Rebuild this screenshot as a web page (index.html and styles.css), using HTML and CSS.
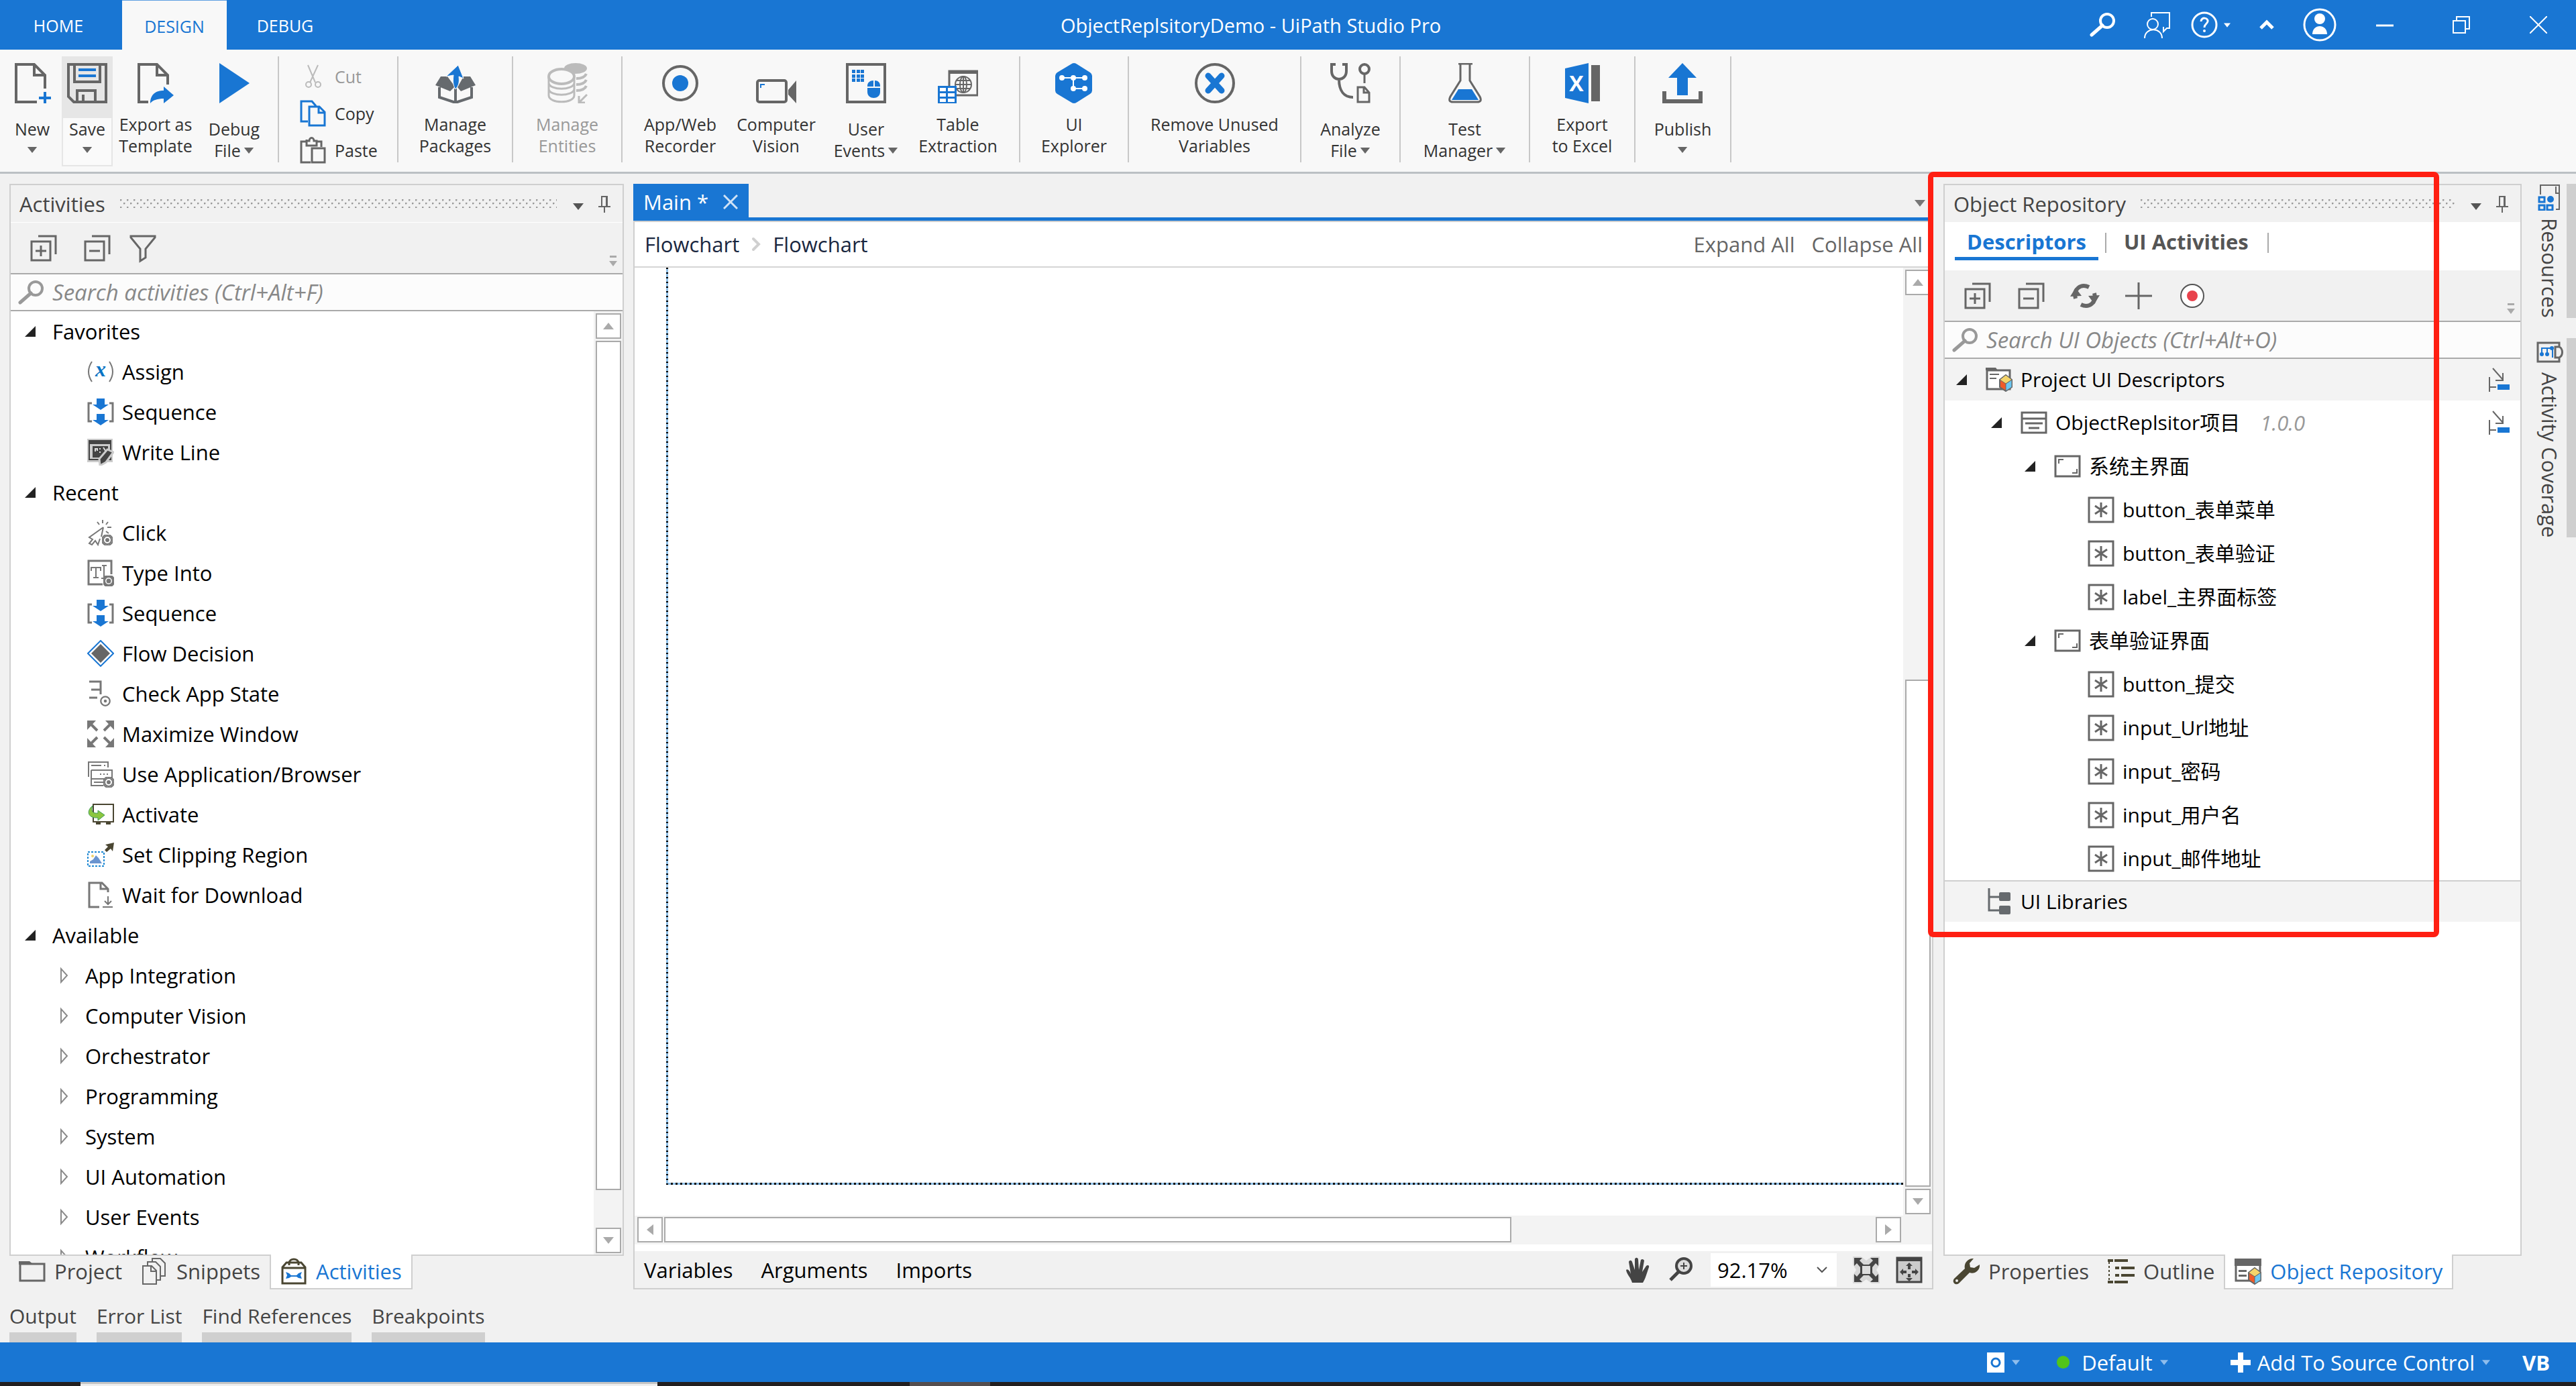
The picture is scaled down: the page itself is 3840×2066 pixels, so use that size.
FILE: index.html
```html
<!DOCTYPE html>
<html lang="en">
<head>
  <meta charset="UTF-8" />
  <meta name="viewport" content="width=device-width, initial-scale=1.0" />
  <title>ObjectReplsitoryDemo - UiPath Studio Pro</title>
  <link rel="stylesheet" href="styles.css">
</head>
<body>
  <!-- shared icons -->
  <svg class="sprite" aria-hidden="true">
    <symbol id="i-down" viewBox="0 0 16 10"><path d="M0 0h16L8 10z" fill="currentColor"/></symbol>
    <symbol id="i-up" viewBox="0 0 16 10"><path d="M0 10h16L8 0z" fill="currentColor"/></symbol>
    <symbol id="i-open" viewBox="0 0 18 18"><path d="M17 1v16H1z" fill="#222"/></symbol>
    <symbol id="i-closed" viewBox="0 0 14 26"><path d="M2 3v20l9-10z" fill="#fff" stroke="#8a8a8a" stroke-width="2"/></symbol>
    <symbol id="i-search" viewBox="0 0 40 36"><ellipse cx="27" cy="12" rx="10" ry="10" fill="none" stroke="currentColor" stroke-width="4"/><path d="M20 19L4 33" stroke="currentColor" stroke-width="5" stroke-linecap="round"/></symbol>
    <symbol id="i-pin" viewBox="0 0 18 26"><path d="M5 16V2h8v14M0 17h18M9 17v9" fill="none" stroke="#666" stroke-width="2"/><path d="M11 2h3v14h-3z" fill="#666"/></symbol>
    <symbol id="i-expand" viewBox="0 0 40 40"><path d="M12 2h26v27M2 10h28v28H2zM8 24h16M16 16v16" fill="none" stroke="#666" stroke-width="3"/></symbol>
    <symbol id="i-collapse" viewBox="0 0 40 40"><path d="M12 2h26v27M2 10h28v28H2zM8 24h16" fill="none" stroke="#666" stroke-width="3"/></symbol>
    <symbol id="i-more" viewBox="0 0 12 16"><path d="M1 0h10v3H1zM0 8h12l-6 8z" fill="#aaa"/></symbol>
    <symbol id="i-sequence" viewBox="0 0 40 40"><path d="M7 7H2v27h5M33 7h5v27h-5" fill="none" stroke="#777" stroke-width="3"/><path d="M14 0h12v9h6L20 17 8 9h6zM14 23h12v9h6L20 40 8 32h6z" fill="#1976d3"/></symbol>
    <symbol id="i-target" viewBox="0 0 16 16"><circle cx="8" cy="8" r="8" fill="#fff"/><circle cx="8" cy="8" r="6" fill="none" stroke="#777" stroke-width="2"/><circle cx="8" cy="8" r="2" fill="#777"/></symbol>
    <symbol id="i-screen" viewBox="0 0 40 34"><rect x="2" y="2" width="36" height="30" fill="#fff" stroke="#666" stroke-width="3"/><path d="M7 13V7h7M34 21v6h-7" fill="none" stroke="#666" stroke-width="2"/></symbol>
    <symbol id="i-element" viewBox="0 0 40 40"><rect x="2" y="2" width="36" height="36" fill="#fff" stroke="#666" stroke-width="3"/><path d="M20 9v22M11 14l18 12M11 26l18-12" stroke="#666" stroke-width="3"/></symbol>
    <symbol id="i-insert" viewBox="0 0 32 36"><path d="M2 14v22M2 29h10M7 1l15 17M22 8v11H11" fill="none" stroke="#666" stroke-width="2"/><path d="M14 25h18v8H14z" fill="#1976d3"/></symbol>
    <symbol id="i-cube" viewBox="0 0 20 26"><path d="M10 1l9 7v11l-9 6-9-6V8z" fill="#f05a28" stroke="#666" stroke-width="2"/><path d="M10 14l9-6v11l-9 6z" fill="#6cc7f2" stroke="#666"/><path d="M10 1l9 7-9 6-9-6z" fill="#f4d46a" stroke="#666"/></symbol>
  </svg>

  <header class="titlebar">
    <nav class="ribbon-tabs">
      <a href="#" class="tab-home">HOME</a>
      <a href="#" class="active">DESIGN</a>
      <a href="#" class="tab-debug">DEBUG</a>
    </nav>
    <h1 class="window-title">ObjectReplsitoryDemo - UiPath Studio Pro</h1>
    <div class="window-tools">
      <button aria-label="Search"><svg width="40" height="36"><use href="#i-search"/></svg></button>
      <button aria-label="Feedback"><svg width="40" height="40" viewBox="0 0 40 40" fill="none" stroke="#fff" stroke-width="2"><path d="M11 8V2h27v23h-4l-5 5v-7M1 40c0-17 26-17 26 0"/><circle cx="13" cy="19" r="8"/></svg></button>
      <button class="help" aria-label="Help"><svg width="40" height="40" viewBox="0 0 40 40"><circle cx="20" cy="20" r="18" fill="none" stroke="#fff" stroke-width="3"/><path d="M15 15c0-7 11-6 10 0-1 4-5 4-5 9" fill="none" stroke="#fff" stroke-width="3"/><circle cx="20" cy="29" r="2" fill="#fff"/></svg><svg width="10" height="7"><use href="#i-down"/></svg></button>
      <button aria-label="Collapse ribbon"><svg width="24" height="16" viewBox="0 0 24 16"><path d="M3 13l9-9 9 9" fill="none" stroke="#fff" stroke-width="5"/></svg></button>
      <button aria-label="Account"><svg width="50" height="50" viewBox="0 0 50 50"><circle cx="25" cy="25" r="23" fill="none" stroke="#fff" stroke-width="3"/><circle cx="25" cy="16" r="8" fill="#fff"/><path d="M14 39c0-16 22-16 22 0z" fill="#fff"/></svg></button>
      <button class="win" aria-label="Minimize"><svg width="26" height="26" viewBox="0 0 26 26"><path d="M0 14h26" stroke="#fff" stroke-width="3"/></svg></button>
      <button class="win" aria-label="Restore"><svg width="26" height="26" viewBox="0 0 26 26"><path d="M1 7h18v18H1zM6 6V1h19v18h-5" fill="none" stroke="#fff" stroke-width="2"/></svg></button>
      <button class="win" aria-label="Close"><svg width="26" height="26" viewBox="0 0 26 26"><path d="M0 0l26 26M26 0L0 26" stroke="#fff" stroke-width="2"/></svg></button>
    </div>
  </header>

  <section class="ribbon">
    <div class="group group-file">
      <button class="rb menu"><svg viewBox="0 0 60 60" fill="none" stroke="#666" stroke-width="4"><path d="M37 58H6V2h27l16 16v20M33 2v16h16" /><path d="M49 43v17M40 52h18" stroke="#1976d3"/></svg><span>New</span><svg class="arrow"><use href="#i-down"/></svg></button>
      <button class="rb menu selected"><svg viewBox="0 0 60 60" fill="none" stroke="#666" stroke-width="4"><path d="M2 2h56v56H10l-8-8zM11 2v26h38V2M15 58V41h27v17M24 47v13"/><path d="M17 10h26M17 19h26" stroke="#1976d3"/></svg><span>Save</span><svg class="arrow"><use href="#i-down"/></svg></button>
      <button class="rb"><svg viewBox="0 0 60 60"><path d="M19 58H5V2h27l16 16v14M32 2v16h16" fill="none" stroke="#666" stroke-width="4"/><path d="M22 60c0-14 9-19 20-19v-6l15 13-15 12v-7c-9 0-16 2-20 7z" fill="#1976d3"/></svg><span>Export as<br>Template</span></button>
      <button class="rb menu"><svg viewBox="0 0 60 60"><path d="M8 0l45 30L8 60z" fill="#1976d3"/></svg><span>Debug<br>File<svg class="arrow"><use href="#i-down"/></svg></span></button>
    </div>
    <div class="group group-clipboard">
      <button class="clip off"><svg viewBox="0 0 40 40" fill="none" stroke="#bbb" stroke-width="2"><path d="M12 3l11 26M27 3L15 29"/><circle cx="13" cy="32" r="4"/><circle cx="27" cy="32" r="4"/></svg>Cut</button>
      <button class="clip"><svg viewBox="0 0 40 40" fill="none" stroke="#1976d3" stroke-width="3"><path d="M12 32H2V2h16l6 7M14 10h15l8 8v20H14zM28 10v9h9"/></svg>Copy</button>
      <button class="clip"><svg viewBox="0 0 40 40" fill="none" stroke="#666" stroke-width="3"><path d="M16 38H2V7h8M25 7h7v8M10 4v9h15V6h-4c0-6-7-6-7 0h-4M18 17h19v21H18z"/></svg>Paste</button>
    </div>
    <div class="group">
      <button class="rb"><svg viewBox="0 0 60 60"><path d="M6 36v15l24 8 24-8V36M30 38v20" fill="none" stroke="#666a6e" stroke-width="4"/><path d="M18 20L8 20 0 33l22 9 7-7zM42 20l10 0 8 13-22 9-5-6z" fill="#666a6e"/><path d="M34 3l8 20-7-3c1 8 0 14-5 19-4-6-4-13-3-21l-11 2z" fill="#1976d3" stroke="#f8f8f8"/></svg><span>Manage<br>Packages</span></button>
    </div>
    <div class="group">
      <button class="rb off"><svg viewBox="0 0 60 60" fill="none" stroke="#bbb" stroke-width="4"><ellipse cx="42" cy="8" rx="17" ry="8" fill="#bbb" stroke="none"/><path d="M58 16c-2 5-8 7-15 7M58 25c-2 5-8 7-15 7M58 34c-2 5-8 7-15 7"/><ellipse cx="21" cy="20" rx="19" ry="11" fill="#f8f8f8"/><path d="M2 21v27c0 13 38 13 38 0V21M2 30c2 11 36 11 38 0M2 39c2 11 36 11 38 0" stroke-width="3"/><path d="M59 47L48 58M47 49v10h9" stroke-width="3"/></svg><span>Manage<br>Entities</span></button>
    </div>
    <div class="group group-record">
      <button class="rb"><svg viewBox="0 0 60 60"><circle cx="30" cy="30" r="25" fill="none" stroke="#666" stroke-width="4"/><circle cx="30" cy="30" r="12" fill="#1976d3"/></svg><span>App/Web<br>Recorder</span></button>
      <button class="rb"><svg viewBox="0 0 60 60"><rect x="2" y="26" width="43" height="32" rx="3" fill="none" stroke="#666" stroke-width="4"/><path d="M48 40l12-14v34L48 47z" fill="#666"/><path d="M7 37v-5h6" fill="none" stroke="#1976d3" stroke-width="2"/></svg><span>Computer<br>Vision</span></button>
      <button class="rb menu"><svg viewBox="0 0 60 60"><rect x="2" y="2" width="56" height="56" fill="none" stroke="#666" stroke-width="4"/><path d="M9 10h5v5H9zM16 10h5v5h-5zM22 10h5v5h-5zM9 17h5v5H9zM16 17h5v5h-5zM22 17h5v5h-5zM9 23h5v5H9zM16 23h5v5h-5zM22 23h5v5h-5z" fill="#1976d3"/><path d="M32 35v-1c0-5 4-8 9-8v9zM43 26c5 0 8 3 8 8v1h-8zM32 37h19v6c0 12-19 12-19 0z" fill="#1976d3"/></svg><span>User<br>Events<svg class="arrow"><use href="#i-down"/></svg></span></button>
      <button class="rb"><svg viewBox="0 0 60 60"><path d="M17 12h42v36H17z" fill="none" stroke="#666" stroke-width="3"/><path d="M16 11h44v5H16z" fill="#666"/><g fill="none" stroke="#666" stroke-width="2"><circle cx="38" cy="32" r="12"/><ellipse cx="38" cy="32" rx="5" ry="12"/><path d="M38 20v24M26 32h24M28 26h20M28 38h20"/></g><path d="M0 34h28v26H0z" fill="#1976d3"/><path d="M3 37h9v5H3zM15 37h10v5H15zM3 45h9v5H3zM15 45h10v5H15zM3 53h9v5H3zM15 53h10v5H15z" fill="#fff"/></svg><span>Table<br>Extraction</span></button>
    </div>
    <div class="group">
      <button class="rb"><svg viewBox="0 0 60 60"><path d="M25 2q5-4 10 0l19 12q3 2 3 5v22q0 3-3 5L35 58q-5 4-10 0L5 46q-3-2-3-5V19q0-3 3-5z" fill="#1976d3"/><path d="M12 22h34M29 22v16h17" fill="none" stroke="#fff" stroke-width="2"/><g fill="#fff"><circle cx="12" cy="22" r="4"/><circle cx="29" cy="22" r="4"/><circle cx="46" cy="22" r="4"/><circle cx="29" cy="38" r="4"/><circle cx="46" cy="38" r="4"/></g></svg><span>UI<br>Explorer</span></button>
    </div>
    <div class="group">
      <button class="rb"><svg viewBox="0 0 60 60"><circle cx="30" cy="30" r="28" fill="none" stroke="#666" stroke-width="4"/><path d="M20 19l20 22M40 19L20 41" stroke="#1976d3" stroke-width="9" stroke-linecap="round"/></svg><span>Remove Unused<br>Variables</span></button>
    </div>
    <div class="group">
      <button class="rb menu"><svg viewBox="0 0 60 60" fill="none" stroke="#666" stroke-width="4"><path d="M8 2H2v10c0 16 22 16 22 0V2h-6M13 24c0 18 8 27 21 27"/><circle cx="51" cy="9" r="7"/><path d="M51 16v14M41 36h10l7 8v14H41zM50 36v8h8" stroke-width="3"/></svg><span>Analyze<br>File<svg class="arrow"><use href="#i-down"/></svg></span></button>
    </div>
    <div class="group">
      <button class="rb menu"><svg viewBox="0 0 60 60"><path d="M20 1h21M23 1v25L8 50q-4 8 4 8h36q8 0 4-8L37 26V1" fill="none" stroke="#666" stroke-width="3"/><path d="M20 39h20l10 16H10z" fill="#1976d3"/></svg><span>Test<br>Manager<svg class="arrow"><use href="#i-down"/></svg></span></button>
    </div>
    <div class="group">
      <button class="rb"><svg viewBox="0 0 60 60"><path d="M4 8l35-8v60L4 52z" fill="#1976d3"/><path d="M43 3h13v54H43z" fill="#666"/><text x="21" y="42" text-anchor="middle" class="excel-x">X</text></svg><span>Export<br>to Excel</span></button>
    </div>
    <div class="group">
      <button class="rb menu"><svg viewBox="0 0 60 60"><path d="M30 0l21 22H38v26H22V22H9z" fill="#1976d3"/><path d="M3 42v15h54V42" fill="none" stroke="#666" stroke-width="6"/></svg><span>Publish</span><svg class="arrow"><use href="#i-down"/></svg></button>
    </div>
  </section>

  <main class="workspace">
    <section class="dock dock-left">
      <div class="dock-frame">
        <header class="dock-header"><h2>Activities</h2><i class="grip"></i><svg class="arrow-lg"><use href="#i-down"/></svg><svg width="18" height="26"><use href="#i-pin"/></svg></header>
        <div class="toolbar">
          <button aria-label="Expand all"><svg><use href="#i-expand"/></svg></button>
          <button aria-label="Collapse all"><svg><use href="#i-collapse"/></svg></button>
          <button class="filter" aria-label="Filter"><svg viewBox="0 0 40 40"><path d="M2 2h36v2L24 21v13l-8 5V21L2 4z" fill="none" stroke="#666" stroke-width="3"/></svg></button>
          <svg class="more"><use href="#i-more"/></svg>
        </div>
        <label class="search"><svg><use href="#i-search"/></svg><input type="text" placeholder="Search activities (Ctrl+Alt+F)" aria-label="Search activities"></label>
        <div class="scroll-area">
          <ul class="activities">
            <li class="root"><svg><use href="#i-open"/></svg>Favorites</li>
            <li><svg viewBox="0 0 40 40"><path d="M7 5q-10 15 0 30M33 5q10 15 0 30" fill="none" stroke="#777" stroke-width="2"/><text x="20" y="27" text-anchor="middle" class="assign-x">x</text></svg>Assign</li>
            <li><svg><use href="#i-sequence"/></svg>Sequence</li>
            <li><svg viewBox="0 0 40 40"><path d="M0 0h38v35H0z" fill="#ccc"/><path d="M3 4h32v27H3z" fill="none" stroke="#444" stroke-width="2"/><path d="M2 2h34v6H2z" fill="#444"/><path d="M8 11h23v17H8z" fill="#444"/><path d="M12 19v-4h3v3M19 14v2M19 19v2M24 13l4 6" fill="none" stroke="#ddd" stroke-width="2"/><path d="M19 40l-1-10 12-14 9 4-11 15z" fill="#444" stroke="#ccc" stroke-width="3"/></svg>Write Line</li>
            <li class="root"><svg><use href="#i-open"/></svg>Recent</li>
            <li><svg viewBox="0 0 40 40" fill="none" stroke="#777" stroke-width="2"><path d="M24 12L3 27l5 3-5 6 4 2 5-6 4 6 3-9M24 12l-3 14M23 1v5M15 4l3 4M31 4l-3 4M30 12h6M28 18l4 3"/><use href="#i-target" x="22" y="23" width="16" height="16"/></svg>Click</li>
            <li><svg viewBox="0 0 40 40" fill="none" stroke="#777" stroke-width="3"><path d="M36 22V2H2v35h21"/><path d="M6 17v-5h14v5M13 12v15M9 27h8M22 9h7M25 9v19M21 28h5" stroke-width="2"/><use href="#i-target" x="24" y="24" width="16" height="16"/></svg>Type Into</li>
            <li><svg><use href="#i-sequence"/></svg>Sequence</li>
            <li><svg viewBox="0 0 40 40"><path d="M20 1l19 19-19 19L1 20z" fill="#fff" stroke="#1976d3" stroke-width="2"/><path d="M20 6l14 14-14 14L6 20z" fill="#666"/></svg>Flow Decision</li>
            <li><svg viewBox="0 0 40 40"><path d="M3 2h17v19M6 14h14M3 26h12" fill="none" stroke="#777" stroke-width="3"/><use href="#i-target" x="18" y="22" width="18" height="18"/></svg>Check App State</li>
            <li><svg viewBox="0 0 40 40"><path d="M5 5l10 10M35 5L25 15M5 35l10-10M35 35L25 25" stroke="#777" stroke-width="4"/><path d="M0 0h13L0 14zM40 0H27l13 14zM0 40h13L0 26zM40 40H27l13-14z" fill="#777"/></svg>Maximize Window</li>
            <li><svg viewBox="0 0 40 40" fill="none" stroke="#777" stroke-width="2"><path d="M2 24V2h29v8M6 7h15M25 7h2M6 14h31v13M6 14v23h18M6 27h20M10 32h14M19 20h2M24 20h2M29 20h2"/><use href="#i-target" x="24" y="24" width="16" height="16"/></svg>Use Application/Browser</li>
            <li><svg viewBox="0 0 40 40"><path d="M9 5h30v26H9z" fill="#fff" stroke="#4a4632" stroke-width="2"/><path d="M13 31h7v4h-7zM28 31h7v4h-7z" fill="#4a4632"/><path d="M8 7C-2 15 1 26 16 25v4l10-8-10-7v4C8 19 5 15 8 7z" fill="#8cc63f" stroke="#3f9c56"/></svg>Activate</li>
            <li><svg viewBox="0 0 40 40"><path d="M1 16h24v21H1z" fill="none" stroke="#1e88d2" stroke-width="2" stroke-dasharray="3 2"/><path d="M4 33v-3l5-3 4-6 4 4 5 8z" fill="#6a94cf"/><circle cx="8" cy="22" r="2" fill="#f1d36b"/><path d="M40 2L27 5l4 3-5 5 3 3 6-5 3 4z" fill="#4a4632"/></svg>Set Clipping Region</li>
            <li><svg viewBox="0 0 40 40" fill="none" stroke="#777" stroke-width="3"><path d="M18 38H3V2h19l9 9v5M20 2v9h11"/><path d="M31 22v12M26 29l5 5 5-5M23 38h15" stroke-width="2"/></svg>Wait for Download</li>
            <li class="root"><svg><use href="#i-open"/></svg>Available</li>
            <li class="cat"><svg><use href="#i-closed"/></svg>App Integration</li>
            <li class="cat"><svg><use href="#i-closed"/></svg>Computer Vision</li>
            <li class="cat"><svg><use href="#i-closed"/></svg>Orchestrator</li>
            <li class="cat"><svg><use href="#i-closed"/></svg>Programming</li>
            <li class="cat"><svg><use href="#i-closed"/></svg>System</li>
            <li class="cat"><svg><use href="#i-closed"/></svg>UI Automation</li>
            <li class="cat"><svg><use href="#i-closed"/></svg>User Events</li>
            <li class="cat"><svg><use href="#i-closed"/></svg>Workflow</li>
          </ul>
          <div class="vscroll">
            <button aria-label="Scroll up"><svg><use href="#i-up"/></svg></button>
            <div class="track track-activities"><div class="thumb"></div></div>
            <button aria-label="Scroll down"><svg><use href="#i-down"/></svg></button>
          </div>
        </div>
      </div>
      <nav class="dock-tabs">
        <a href="#"><svg viewBox="0 0 40 40"><path d="M2 9h36v25H2z" fill="none" stroke="#666" stroke-width="3"/><path d="M0 5h16l6 5H0z" fill="#666"/></svg>Project</a>
        <a href="#"><svg viewBox="0 0 40 40" fill="#f1f1f1" stroke="#666" stroke-width="2"><path d="M17 1h12l7 7v19H17z"/><path d="M10 6h12l7 7v20H10z"/><path d="M3 12h13l7 7v20H3zM15 12v8h8"/></svg>Snippets</a>
        <a href="#" class="active"><svg viewBox="0 0 40 40"><path d="M3 14l6-7h22l6 7v24H3zM3 15h34M13 11V8c0-8 14-8 14 0v3" fill="none" stroke="#4a4632" stroke-width="3"/><path d="M8 21l5 2 3 3h8l3-3 5-2-2 5 2 5-5-1-3-2h-8l-3 2-5 1 2-5z" fill="#1976d3"/></svg>Activities</a>
      </nav>
    </section>

    <section class="designer">
      <div class="doc-tabs">
        <a href="#" class="doc-tab">Main *<svg width="22" height="22" viewBox="0 0 22 22"><path d="M1 1l20 20M21 1L1 21" stroke="#cfe2f6" stroke-width="3"/></svg></a>
        <svg class="arrow-lg"><use href="#i-down"/></svg>
      </div>
      <div class="doc-body">
        <div class="breadcrumb">
          <a href="#">Flowchart</a>
          <svg width="14" height="22" viewBox="0 0 14 22"><path d="M3 3l8 8-8 8" fill="none" stroke="#d0d0d0" stroke-width="4" stroke-linecap="round"/></svg>
          <a href="#">Flowchart</a>
          <button class="first">Expand All</button>
          <button>Collapse All</button>
        </div>
        <div class="canvas-row">
          <div class="canvas"><div class="flow"></div></div>
          <div class="vscroll">
            <button aria-label="Scroll up"><svg><use href="#i-up"/></svg></button>
            <div class="track track-canvas"><div class="thumb"></div></div>
            <button aria-label="Scroll down"><svg><use href="#i-down"/></svg></button>
          </div>
        </div>
        <div class="hscroll">
          <button aria-label="Scroll left"><svg class="left"><use href="#i-up"/></svg></button>
          <div class="track"><div class="thumb"></div></div>
          <button aria-label="Scroll right"><svg class="right"><use href="#i-up"/></svg></button>
        </div>
        <div class="designer-bar">
          <button>Variables</button>
          <button>Arguments</button>
          <button>Imports</button>
          <div class="zoom-tools">
            <svg viewBox="0 0 40 40"><path d="M11 39c-2-8-8-12-9-19 2-2 5 0 7 6L6 8c1-3 4-3 5 0l4 12V4c1-3 4-3 5 0l1 16 3-15c2-2 4-1 5 1l-3 17 6-9c2-2 5-1 4 2-3 8-5 17-9 23z" fill="#444"/></svg>
            <svg viewBox="0 0 40 40"><circle cx="24" cy="14" r="11" fill="#ddd" stroke="#444" stroke-width="4"/><path d="M24 9v10M19 14h10" stroke="#444" stroke-width="2"/><path d="M16 23L4 35" stroke="#444" stroke-width="5"/></svg>
            <label class="zoom-select"><select aria-label="Zoom"><option>92.17%</option></select><svg width="16" height="10" viewBox="0 0 16 10"><path d="M1 1l7 7 7-7" fill="none" stroke="#555" stroke-width="2"/></svg></label>
            <svg viewBox="0 0 40 40"><path d="M0 0h12l8 6 8-6h12v12l-5 8 5 8v12H28l-8-6-8 6H0V28l5-8-5-8z" fill="#d8d8d8"/><path d="M2 2h12l-4 4 6 6h8l6-6-4-4h12v12l-4-4-5 6v8l5 6 4-4v12H26l4-4-6-6h-8l-6 6 4 4H2V26l4 4 5-6v-8l-5-6-4 4z" fill="#444"/><path d="M14 14h12v12H14z" fill="#ddd"/></svg>
            <svg viewBox="0 0 40 40"><path d="M2 2h36v36H2z" fill="#ccc" stroke="#444" stroke-width="3"/><path d="M1 1h38v6H1zM20 9l5 5H15zM20 37l5-5H15zM6 23l5-5v10zM34 23l-5-5v10zM18 14h4v5h-4zM18 26h4v5h-4zM11 21h5v4h-5zM24 21h5v4h-5z" fill="#444"/></svg>
          </div>
        </div>
      </div>
    </section>

    <section class="dock dock-right">
      <div class="dock-frame">
        <header class="dock-header"><h2>Object Repository</h2><i class="grip"></i><svg class="arrow-lg"><use href="#i-down"/></svg><svg width="18" height="26"><use href="#i-pin"/></svg></header>
        <nav class="repo-tabs">
          <a href="#" class="active">Descriptors</a>
          <a href="#">UI Activities</a>
        </nav>
        <div class="toolbar">
          <button aria-label="Expand all"><svg><use href="#i-expand"/></svg></button>
          <button aria-label="Collapse all"><svg><use href="#i-collapse"/></svg></button>
          <button aria-label="Refresh"><svg viewBox="0 0 40 40"><path d="M6 24C2 10 14 1 26 7M34 16c4 14-8 23-20 17" fill="none" stroke="#666" stroke-width="6"/><path d="M-2 21L6 8l9 12zM42 19l-8 13-9-12z" fill="#666"/></svg></button>
          <button aria-label="Add"><svg viewBox="0 0 40 40"><path d="M20 0v40M0 20h40" stroke="#666" stroke-width="3"/></svg></button>
          <button aria-label="Record"><svg viewBox="0 0 40 40"><circle cx="20" cy="20" r="17" fill="#fff" stroke="#555" stroke-width="2"/><circle cx="20" cy="20" r="8" fill="#e8424c"/></svg></button>
          <svg class="more"><use href="#i-more"/></svg>
        </div>
        <label class="search"><svg><use href="#i-search"/></svg><input type="text" placeholder="Search UI Objects (Ctrl+Alt+O)" aria-label="Search UI Objects"></label>
        <ul class="tree">
          <li class="band"><svg class="caret"><use href="#i-open"/></svg><svg viewBox="0 0 40 36"><path d="M2 4h34v28H2z" fill="#fff" stroke="#666" stroke-width="3"/><path d="M0 0h15l3 4H0zM6 9h14v2H6zM6 15h10v2H6z" fill="#666"/><use href="#i-cube" x="20" y="10" width="20" height="26"/></svg>Project UI Descriptors<svg class="insert"><use href="#i-insert"/></svg></li>
          <li class="lv1"><svg class="caret"><use href="#i-open"/></svg><svg viewBox="0 0 40 34"><path d="M2 2h36v30H2zM2 11h36M7 18h26M12 25h16" fill="none" stroke="#666" stroke-width="3"/></svg>ObjectReplsitor项目<em>1.0.0</em><svg class="insert"><use href="#i-insert"/></svg></li>
          <li class="lv2"><svg class="caret"><use href="#i-open"/></svg><svg><use href="#i-screen"/></svg>系统主界面</li>
          <li class="lv3"><svg><use href="#i-element"/></svg>button_表单菜单</li>
          <li class="lv3"><svg><use href="#i-element"/></svg>button_表单验证</li>
          <li class="lv3"><svg><use href="#i-element"/></svg>label_主界面标签</li>
          <li class="lv2"><svg class="caret"><use href="#i-open"/></svg><svg><use href="#i-screen"/></svg>表单验证界面</li>
          <li class="lv3"><svg><use href="#i-element"/></svg>button_提交</li>
          <li class="lv3"><svg><use href="#i-element"/></svg>input_Url地址</li>
          <li class="lv3"><svg><use href="#i-element"/></svg>input_密码</li>
          <li class="lv3"><svg><use href="#i-element"/></svg>input_用户名</li>
          <li class="lv3"><svg><use href="#i-element"/></svg>input_邮件地址</li>
          <li class="band libraries"><svg viewBox="0 0 40 40"><path d="M5 0v33h17M5 13h17" fill="none" stroke="#666a6e" stroke-width="3"/><rect x="20" y="6" width="17" height="13" rx="2" fill="#666a6e"/><rect x="20" y="26" width="17" height="13" rx="2" fill="#666a6e"/></svg>UI Libraries</li>
        </ul>
      </div>
      <nav class="dock-tabs">
        <a href="#"><svg viewBox="0 0 40 40"><path d="M40 10c1 8-7 15-15 12L9 38c-5 4-11-2-7-7l16-15C16 8 23 0 31 1l-6 7 1 6 6 1z" fill="#4a4632"/><circle cx="6" cy="34" r="2" fill="#f1f1f1"/></svg>Properties</a>
        <a href="#"><svg viewBox="0 0 40 40"><path d="M0 4h8M10 4h20M11 15h6M20 15h20M11 26h6M20 26h20M0 36h8M10 36h20" stroke="#4a4632" stroke-width="4"/><path d="M2 6v30" stroke="#4a4632" stroke-width="2" stroke-dasharray="3 3"/></svg>Outline</a>
        <a href="#" class="active"><svg viewBox="0 0 40 40"><path d="M2 4h36v30H2z" fill="#fff" stroke="#666" stroke-width="3"/><path d="M0 1h40v11H0zM6 18h12v3H6zM6 25h12v3H6z" fill="#666"/><use href="#i-cube" x="20" y="14" width="20" height="26"/></svg>Object Repository</a>
      </nav>
      <div class="highlight"></div>
    </section>

    <aside class="side-tabs">
      <button class="resources"><svg width="36" height="40" viewBox="0 0 36 40"><path d="M4 16V2h28v12h-5V4M27 14h5v24h-5" fill="none" stroke="#666" stroke-width="2"/><path d="M2 20h8v7H2zM2 32h8v7H2zM14 32h8v7h-8z" fill="none" stroke="#1976d3" stroke-width="3"/><circle cx="19" cy="23" r="5" fill="#1976d3"/></svg><span>Resources</span></button>
      <button class="coverage"><svg width="40" height="32" viewBox="0 0 40 32"><path d="M34 8V2H2v28h32v-6M34 8h-6v16h6c6-3 6-13 0-16z" fill="none" stroke="#666" stroke-width="3"/><path d="M8 18v-8h16v14M16 10v8" fill="none" stroke="#1976d3" stroke-width="2"/><circle cx="8" cy="19" r="3" fill="#1976d3"/><circle cx="16" cy="19" r="3" fill="#1976d3"/><circle cx="23" cy="10" r="3" fill="#1976d3"/></svg><span>Activity Coverage</span></button>
    </aside>
  </main>

  <nav class="bottom-tabs">
    <button>Output</button>
    <button>Error List</button>
    <button>Find References</button>
    <button>Breakpoints</button>
  </nav>

  <footer class="statusbar">
    <button class="doc"><svg width="26" height="30" viewBox="0 0 26 30"><path d="M0 0h26v30H0z" fill="#fff"/><circle cx="13" cy="15" r="6" fill="none" stroke="#1976d3" stroke-width="3"/></svg><svg class="arrow-sm"><use href="#i-down"/></svg></button>
    <button class="robot"><i class="dot"></i>Default<svg class="arrow-sm"><use href="#i-down"/></svg></button>
    <button class="source"><svg width="30" height="30" viewBox="0 0 30 30"><path d="M15 0v30M0 15h30" stroke="#fff" stroke-width="8"/></svg>Add To Source Control<svg class="arrow-sm"><use href="#i-down"/></svg></button>
    <strong>VB</strong>
  </footer>
  <div class="taskbar"><i class="task-window"></i><i class="task-item"></i></div>
</body>
</html>
```
FILE: styles.css
```css
:root {
  --blue: #1976d3;
  --bg: #f1f1f1;
  --line: #cfcfcf;
  --dark-line: #aaa;
  --text: #444;
}

* {
  margin: 0;
  padding: 0;
  box-sizing: border-box;
}

body {
  display: flex;
  flex-direction: column;
  height: 100vh;
  overflow: hidden;
  background: var(--bg);
  font-family: "Open Sans", "Noto Sans CJK SC", sans-serif;
  font-size: 31px;
  line-height: 40px;
  color: #000;
}

button,
input,
select {
  font: inherit;
  color: inherit;
  background: none;
  border: none;
}

button {
  display: flex;
  align-items: center;
  white-space: nowrap;
}

a {
  color: inherit;
  text-decoration: none;
}

ul {
  list-style: none;
}

svg {
  flex: none;
  display: block;
}

.sprite {
  position: absolute;
  width: 0;
  height: 0;
}

/* title bar */
.titlebar {
  display: grid;
  grid-template-columns: 1fr auto 1fr;
  align-items: center;
  height: 74px;
  flex: none;
  background: var(--blue);
  color: #fff;
}

.ribbon-tabs {
  display: flex;
  align-self: stretch;
  font-size: 25px;
}

.ribbon-tabs a {
  display: flex;
  align-items: center;
  justify-content: center;
  width: 174px;
  padding-top: 2px;
}

.ribbon-tabs .tab-home {
  width: 182px;
  padding-right: 8px;
}

.ribbon-tabs .active {
  width: 156px;
  background: #f8f8f8;
  color: var(--blue);
  border-top: 1px solid #5d9fe2;
}

.window-title {
  font-size: 29px;
  font-weight: 400;
  padding: 2px 116px 0 0;
}

.titlebar {
  grid-template-columns: 1581px auto 1fr;
}

.window-tools {
  display: flex;
  justify-content: flex-end;
  align-items: center;
  gap: 42px;
  padding-right: 43px;
}

.window-tools .help {
  gap: 9px;
  margin-left: -12px;
}

.window-tools .win {
  width: 60px;
  justify-content: center;
  margin-right: 12px;
}

.window-tools .win:last-child {
  width: 26px;
  margin-left: 18px;
  margin-right: 0;
}

/* ribbon */
.ribbon {
  display: grid;
  grid-template-columns: 416px 178px 171px 163px 593px 162px 257px 148px 193px 157px 143px;
  flex: none;
  height: 185px;
  padding-top: 10px;
  background: #f8f8f8;
  border-bottom: 3px solid #bbc0c4;
  color: #333;
}

.group {
  display: flex;
  justify-content: center;
  height: 158px;
  border-right: 2px solid #c8c8c8;
}

.group-file {
  display: grid;
  grid-template-columns: 76px 76px 116px 106px;
  gap: 6px;
  justify-content: start;
  padding-left: 10px;
}

.group-record {
  display: grid;
  grid-template-columns: 144px 142px 126px 148px;
  justify-content: start;
  padding-left: 14px;
}

.rb {
  flex-direction: column;
  height: 164px;
  padding-top: 10px;
  font-size: 25px;
  line-height: 32px;
  text-align: center;
}

.rb > svg:first-child {
  width: 60px;
  height: 60px;
  margin-bottom: 15px;
}

.rb.menu > svg:first-child {
  margin-bottom: 22px;
}

.rb .arrow {
  width: 16px;
  height: 9px;
  color: #666;
}

.rb > .arrow {
  margin-top: 11px;
}

.rb span .arrow {
  display: inline-block;
  vertical-align: 5px;
  margin-left: 4px;
}

.rb.selected {
  background: linear-gradient(#e6e6e6 90px, #fafafa 90px);
  border: 2px solid #e6e6e6;
  padding-top: 8px;
}

.off {
  color: #999;
}

.excel-x {
  font: bold 32px "Open Sans", sans-serif;
  fill: #fff;
}

.group-clipboard {
  flex-direction: column;
  justify-content: flex-start;
  padding: 2px 0 0 31px;
}

.clip {
  flex: none;
  height: 55px;
  gap: 12px;
  font-size: 25px;
}

.clip svg {
  width: 40px;
  height: 40px;
}

/* workspace */
.workspace {
  display: flex;
  flex: 1;
  min-height: 0;
  padding: 15px 0 0 14px;
}

.dock {
  display: flex;
  flex-direction: column;
  flex: none;
  position: relative;
}

.dock-left {
  width: 916px;
}

.dock-right {
  width: 862px;
}

.dock-frame {
  display: flex;
  flex-direction: column;
  flex: 1;
  min-height: 0;
  border: 2px solid var(--line);
  background: #fff;
}

.dock-header {
  display: flex;
  align-items: center;
  height: 56px;
  flex: none;
  padding: 0 18px 0 13px;
  background: var(--bg);
  border-bottom: 1px solid #fff;
  color: var(--text);
}

.dock-header h2 {
  font-size: 31px;
  font-weight: 400;
}

.grip {
  flex: 1;
  height: 13px;
  margin: 0 22px;
  background: radial-gradient(circle at 1px 1px, #999 1px, transparent 2px) 0 0 / 10px 11px,
    radial-gradient(circle at 1px 1px, #999 1px, transparent 2px) 5px 5px / 10px 11px;
}

.arrow-lg {
  width: 20px;
  height: 10px;
  color: #555;
  margin-top: 8px;
  margin-right: 20px;
}

.toolbar {
  display: flex;
  align-items: center;
  gap: 40px;
  height: 77px;
  flex: none;
  padding: 0 8px 0 29px;
  background: var(--bg);
  border-bottom: 2px solid var(--dark-line);
}

.toolbar button svg {
  width: 40px;
  height: 40px;
  overflow: visible;
}

.toolbar .filter {
  margin-left: -12px;
}

.toolbar .more {
  width: 12px;
  height: 16px;
  margin: 38px 0 0 auto;
}

.search {
  display: flex;
  align-items: center;
  height: 55px;
  flex: none;
  padding-left: 10px;
  gap: 12px;
  background: #fcfcfc;
  border-bottom: 2px solid var(--dark-line);
}

.search svg {
  width: 40px;
  height: 36px;
  color: #999;
}

.search input {
  flex: 1;
  font-size: 33px;
  outline: none;
}

.search input::placeholder {
  color: #888;
  font-style: italic;
  opacity: 1;
}

.scroll-area {
  display: flex;
  flex: 1;
  min-height: 0;
}

.activities {
  flex: 1;
  overflow: hidden;
}

.activities li {
  display: flex;
  align-items: center;
  height: 60px;
  gap: 12px;
  padding-left: 114px;
}

.activities svg {
  width: 40px;
  height: 40px;
}

.activities .root {
  padding-left: 20px;
  gap: 24px;
}

.activities .root svg {
  width: 18px;
  height: 18px;
}

.activities .cat {
  padding-left: 73px;
  gap: 24px;
}

.activities .cat svg {
  width: 14px;
  height: 26px;
}

.assign-x {
  font: italic bold 32px "Liberation Serif", serif;
  fill: #0a74c4;
}

/* scrollbars */
.vscroll {
  display: flex;
  flex-direction: column;
  gap: 3px;
  width: 43px;
  padding: 3px 3px 2px 3px;
  background: #f3f3f3;
}

.vscroll button,
.hscroll button {
  justify-content: center;
  flex: none;
  width: 38px;
  height: 38px;
  background: #fff;
  border: 2px solid var(--dark-line);
}

.vscroll svg,
.hscroll svg {
  width: 18px;
  height: 10px;
  color: var(--dark-line);
}

.track {
  display: flex;
  flex: 1;
}

.vscroll .track {
  flex-direction: column;
}

.thumb {
  background: #fff;
  border: 2px solid var(--dark-line);
}

.vscroll .thumb {
  width: 38px;
}

.track-activities .thumb {
  height: 96%;
}

.track-canvas {
  justify-content: flex-end;
}

.track-canvas .thumb {
  height: 57%;
}

.hscroll {
  display: flex;
  gap: 2px;
  height: 43px;
  flex: none;
  padding: 2px 46px 2px 4px;
  background: #f3f3f3;
}

.hscroll .thumb {
  width: 70%;
  height: 38px;
}

.left {
  transform: rotate(-90deg);
}

.right {
  transform: rotate(90deg);
}

/* tabs under the docks */
.dock-tabs {
  display: flex;
  height: 50px;
  flex: none;
  padding-left: 14px;
  color: var(--text);
}

.dock-tabs a {
  display: flex;
  align-items: center;
  gap: 13px;
  padding: 0 14px 4px 0;
}

.dock-tabs a + a {
  padding-left: 14px;
}

.dock-tabs svg {
  width: 40px;
  height: 40px;
}

.dock-tabs .active {
  margin-top: -2px;
  padding-bottom: 0;
  background: #fff;
  border: 2px solid var(--line);
  border-top: none;
  color: var(--blue);
  z-index: 1;
}

/* designer */
.designer {
  display: flex;
  flex-direction: column;
  flex: 1;
  min-width: 0;
  margin: 0 15px 0 14px;
}

.doc-tabs {
  display: flex;
  align-items: center;
  justify-content: space-between;
  height: 55px;
  flex: none;
  border-bottom: 5px solid var(--blue);
}

.doc-tabs .arrow-lg {
  margin-right: 10px;
  color: #777;
}

.doc-tab {
  display: flex;
  align-items: center;
  gap: 22px;
  height: 50px;
  padding: 4px 16px 0 15px;
  background: var(--blue);
  color: #fff;
}

.doc-body {
  display: flex;
  flex-direction: column;
  flex: 1;
  min-height: 0;
  border: 2px solid var(--line);
  background: #fff;
}

.breadcrumb {
  display: flex;
  align-items: center;
  gap: 18px;
  height: 68px;
  flex: none;
  padding: 0 14px 0 15px;
  border-bottom: 2px solid #d5d5d5;
  color: #1a2740;
}

.breadcrumb button {
  color: #666;
  margin-left: 7px;
}

.breadcrumb .first {
  margin-left: auto;
}

.canvas-row {
  display: flex;
  flex: 1;
  min-height: 0;
}

.canvas {
  flex: 1;
  padding: 0 0 46px 47px;
}

/* dotted selection outline of the flowchart surface */
.flow {
  height: 100%;
  background:
    repeating-linear-gradient(#000 0 2px, #8fc0e8 2px 7px) left / 3px 100% no-repeat,
    repeating-linear-gradient(90deg, #000 0 3px, #8fc0e8 3px 7px) bottom / 100% 3px no-repeat;
}

.designer-bar {
  display: flex;
  align-items: center;
  gap: 42px;
  height: 65px;
  flex: none;
  padding: 0 14px;
  border-top: 10px solid #fff;
  background: var(--bg);
}

.zoom-tools {
  display: flex;
  align-items: center;
  gap: 24px;
  margin-left: auto;
}

.zoom-tools > svg {
  width: 40px;
  height: 40px;
}

.zoom-select {
  position: relative;
}

.zoom-select select {
  display: block;
  width: 188px;
  height: 50px;
  padding-left: 10px;
  background: #fff;
  appearance: none;
}

.zoom-select svg {
  position: absolute;
  right: 14px;
  top: 20px;
}

/* object repository */
.repo-tabs {
  display: flex;
  align-items: flex-start;
  height: 71px;
  flex: none;
  padding: 8px 15px 0;
  font-weight: 700;
  color: #555;
}

.repo-tabs a {
  padding: 0 18px 3px;
  line-height: 40px;
  border-bottom: 5px solid transparent;
}

.repo-tabs .active {
  color: var(--blue);
  border-color: var(--blue);
}

.repo-tabs a::after {
  content: "";
  float: right;
  height: 30px;
  margin: 7px -30px 0 0;
  border-right: 2px solid #aaa;
}

.repo-tabs a + a {
  margin-left: 20px;
}

.tree {
  font-size: 30px;
}

.tree li {
  display: flex;
  align-items: center;
  height: 65px;
  padding-right: 16px;
}

.tree svg {
  width: 40px;
  height: 40px;
  margin-right: 12px;
}

.tree .caret {
  width: 18px;
  height: 18px;
  margin-right: 27px;
}

.tree .insert {
  width: 32px;
  height: 36px;
  margin: 0 0 0 auto;
}

.tree em {
  margin-left: 30px;
  font-size: 31px;
  color: #999;
}

.tree .band {
  height: 62px;
  padding-left: 16px;
  background: #f3f3f3;
}

.tree .lv1 {
  padding-left: 68px;
}

.tree .lv2 {
  padding-left: 118px;
}

.tree .lv3 {
  padding-left: 213px;
}

.tree .libraries {
  padding-left: 61px;
  border-top: 2px solid var(--line);
}

.highlight {
  position: absolute;
  top: -18px;
  left: -23px;
  width: 762px;
  height: 1141px;
  border: 8px solid #ff1f12;
  border-radius: 8px;
  z-index: 2;
  pointer-events: none;
}

/* auto-hidden panels */
.side-tabs {
  display: flex;
  flex-direction: column;
  gap: 30px;
  width: 81px;
  flex: none;
}

.side-tabs button {
  flex-direction: column;
  gap: 11px;
  padding: 0 6px 0 22px;
  border-right: 14px solid var(--line);
  color: var(--text);
}

.side-tabs .coverage {
  gap: 14px;
  padding-top: 5px;
}

.side-tabs span {
  writing-mode: vertical-rl;
}

.bottom-tabs {
  display: flex;
  align-items: flex-end;
  gap: 30px;
  height: 79px;
  flex: none;
  padding-left: 14px;
  font-size: 30px;
  color: var(--text);
}

.bottom-tabs button {
  padding-bottom: 4px;
  border-bottom: 15px solid var(--line);
}

/* status bar */
.statusbar {
  display: flex;
  align-items: center;
  justify-content: flex-end;
  height: 59px;
  flex: none;
  padding-right: 39px;
  background: var(--blue);
  color: #fff;
}

.arrow-sm {
  width: 12px;
  height: 8px;
  margin-left: 11px;
  color: #8fbdec;
}

.robot {
  margin-left: 55px;
}

.dot {
  width: 19px;
  height: 19px;
  margin-right: 18px;
  border-radius: 50%;
  background: #52c41a;
}

.source {
  margin-left: 93px;
}

.source svg:first-child {
  margin-right: 10px;
}

.statusbar strong {
  margin-left: 48px;
}

/* sliver of the desktop taskbar */
.taskbar {
  display: flex;
  height: 6px;
  flex: none;
  padding-left: 120px;
  background: #231f1f;
}

.task-window {
  width: 860px;
  background: #eee;
  border-top: 3px solid #c4c4c4;
}

.task-item {
  width: 120px;
  margin-left: 376px;
  background: #554e4e;
}
```
